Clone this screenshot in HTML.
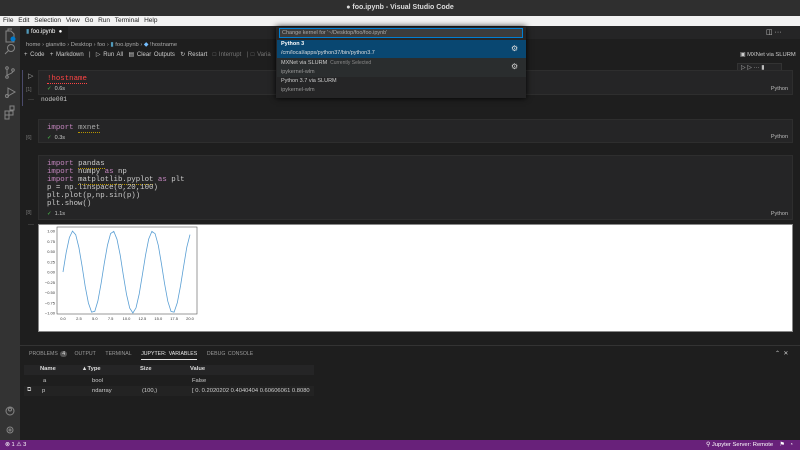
<!DOCTYPE html>
<html><head><meta charset="utf-8"><style>
*{margin:0;padding:0;box-sizing:border-box}
body{width:800px;height:450px;overflow:hidden;background:#1e1e1e;font-family:"Liberation Sans",sans-serif;font-size:6px;color:#ccc;position:relative}
.a{position:absolute;white-space:nowrap}
.mono{font-family:"Liberation Mono",monospace;font-size:7.4px;line-height:8px}
.cell{position:absolute;left:38px;width:755px;background:#252526;border:1px solid #2e2e2e}
.kw{color:#c586c0}.sq{border-bottom:1px dotted #b89500}
.chk{color:#4ec94e}
.py{position:absolute;right:4px;bottom:2px;font-size:5.5px;color:#bbb}
.ln{position:absolute;left:26px;font-size:5px;color:#777}
</style></head><body>
<div class="a" style="left:0;top:0;width:800px;height:16px;background:#2f2f2f;color:#ddd;font-size:7px;font-weight:bold;text-align:center;line-height:16px">● foo.ipynb - Visual Studio Code</div>
<div class="a" style="left:0;top:16px;width:800px;height:10px;background:#f2f2f2;color:#222;font-size:6.5px;line-height:10px;padding-left:3px;word-spacing:3px">File Edit Selection View Go Run Terminal Help</div>
<div class="a" style="left:0;top:26px;width:20px;height:414px;background:#333"></div>
<svg class="a" style="left:0;top:26px" width="20" height="414" fill="none" stroke="#858585" stroke-width="1">
<path d="M6 5h5l3 3v8H6z M8 5V3h4"/><circle cx="13" cy="13" r="2.5" fill="#007acc" stroke="none"/>
<circle cx="11" cy="22" r="3.5"/><path d="M8.5 24.5L5 28"/>
<circle cx="7" cy="42" r="1.3"/><circle cx="7" cy="51" r="1.3"/><circle cx="13" cy="44" r="1.3"/><path d="M7 43v7M13 45c0 3-6 3-6 5"/>
<path d="M8 62l7 4-7 4z"/><circle cx="7" cy="70" r="1.5"/>
<path d="M5 85h4v4H5zM9 85h4v4H9zM5 89h4v4H5zM10 80h4v4h-4z"/>
<circle cx="10" cy="385" r="4"/><circle cx="10" cy="383.5" r="1.5"/>
<circle cx="10" cy="404" r="3"/><circle cx="10" cy="404" r="1"/>
</svg>
<div class="a" style="left:20px;top:26px;width:780px;height:13px;background:#252526"></div>
<div class="a" style="left:20px;top:26px;width:48px;height:13px;background:#1e1e1e;color:#fff;font-size:6px;line-height:13px;padding-left:6px"><span style="color:#519aba">▮</span> foo.ipynb &nbsp;●</div>
<div class="a" style="left:766px;top:28px;color:#ccc;font-size:7px">◫ ···</div>
<div class="a" style="left:26px;top:42px;font-size:5.8px;color:#aaa">home › gianvito › Desktop › foo › <span style="color:#519aba">▮</span> foo.ipynb › <span style="color:#75beff">◆</span> !hostname</div>
<div class="a" style="left:24px;top:51px;font-size:6px;color:#ccc;word-spacing:1px">+ Code &nbsp;+ Markdown &nbsp;| &nbsp;▷ Run All &nbsp;▤ Clear Outputs &nbsp;↻ Restart &nbsp;<span style="color:#777">□ Interrupt &nbsp;| □ Varia</span></div>
<div class="a" style="left:740px;top:52px;font-size:5.8px;color:#ccc">▣ MXNet via SLURM</div>
<div class="a" style="left:737px;top:63px;width:45px;height:10px;border:1px solid #333;background:#252526;font-size:6px;color:#bbb;padding-left:3px;line-height:8px">▷ ▷ ··· ▮</div>
<div class="a" style="left:22px;top:70px;width:1px;height:36px;background:#4a4a6a"></div>
<div class="a" style="left:28px;top:72px;font-size:7px;color:#aaa">▷</div>
<div class="cell" style="top:70px;height:25px"><div class="a mono" style="left:8px;top:4px"><span style="color:#f44;border-bottom:1px dotted #f44">!hostname</span></div><div class="a" style="left:8px;top:15px;font-size:5.5px"><span class="chk">✓</span>&nbsp; 0.6s</div><div class="py">Python</div></div>
<div class="ln" style="top:87px">[1]</div>
<div class="a" style="left:28px;top:97px;color:#aaa">···</div>
<div class="a mono" style="left:41px;top:96px;color:#ccc;font-size:6.2px">node001</div>
<div class="cell" style="top:119px;height:24px"><div class="a mono" style="left:8px;top:4px"><span class="kw">import</span> <span class="sq" style="color:#aaa">mxnet</span></div><div class="a" style="left:8px;top:15px;font-size:5.5px"><span class="chk">✓</span>&nbsp; 0.3s</div><div class="py">Python</div></div>
<div class="ln" style="top:135px">[6]</div>
<div class="cell" style="top:155px;height:65px"><div class="a mono" style="left:8px;top:4px;color:#ccc"><span class="kw">import</span> <span class="sq">pandas</span><br><span class="kw">import</span> numpy <span class="kw">as</span> np<br><span class="kw">import</span> <span class="sq">matplotlib.pyplot</span> <span class="kw">as</span> plt<br>p = np.linspace(0,20,100)<br>plt.plot(p,np.sin(p))<br>plt.show()</div><div class="a" style="left:8px;top:55px;font-size:5.5px"><span class="chk">✓</span>&nbsp; 1.1s</div><div class="py">Python</div></div>
<div class="ln" style="top:210px">[8]</div>
<div class="a" style="left:28px;top:222px;color:#aaa">···</div>
<div class="a" style="left:38px;top:224px;width:755px;height:108px;background:#fff;border:1px solid #888"></div>
<svg class="a" style="left:38px;top:224px" width="170" height="108" font-family="Liberation Sans" font-size="4" fill="#333">
<rect x="19" y="3" width="140" height="87" fill="none" stroke="#555" stroke-width=".6"/>
<g text-anchor="end">
<text x="17" y="8.5">1.00</text><text x="17" y="18.8">0.75</text><text x="17" y="29">0.50</text><text x="17" y="39.3">0.25</text><text x="17" y="49.5">0.00</text><text x="17" y="59.8">−0.25</text><text x="17" y="70">−0.50</text><text x="17" y="80.3">−0.75</text><text x="17" y="90.5">−1.00</text></g>
<g text-anchor="middle"><text x="25" y="96">0.0</text><text x="40.9" y="96">2.5</text><text x="56.8" y="96">5.0</text><text x="72.6" y="96">7.5</text><text x="88.5" y="96">10.0</text><text x="104.4" y="96">12.5</text><text x="120.3" y="96">15.0</text><text x="136.1" y="96">17.5</text><text x="152" y="96">20.0</text></g>
<g transform="translate(25,48)"><polyline fill="none" stroke="#5a9fd4" stroke-width=".8" points="0,0 3.2,-19.6 6.4,-34.5 9.5,-40.9 12.7,-37.3 15.9,-24.5 19.1,-5.8 22.2,14.4 25.4,31 28.6,40.1 31.8,39.3 34.9,28.9 38.1,11.4 41.3,-8.8 44.5,-26.9 47.6,-38.5 50.8,-40.6 54,-32.7 57.2,-16.9 60.3,3.1 63.5,22.3 66.7,36.1 69.9,41 73,35.9 76.2,22 79.4,2.7 82.6,-17.2 85.7,-33 88.9,-40.6 92.1,-38.3 95.3,-26.7 98.4,-8.5 101.6,11.8 104.8,29.2 108,39.4 111.1,40.1 114.3,30.8 117.5,14 120.7,-6.1 123.8,-24.8 127,-37.4"/></g>
</svg>
<div class="a" style="left:20px;top:345px;width:780px;height:95px;background:#1e1e1e;border-top:1px solid #333"></div>
<div class="a" style="left:29px;top:351px;font-size:5.2px;color:#999;word-spacing:1px">PROBLEMS <span style="background:#555;color:#ddd;border-radius:4px;padding:0 2px">4</span> &nbsp; OUTPUT &nbsp;&nbsp; TERMINAL &nbsp;&nbsp; <span style="color:#e7e7e7;border-bottom:1px solid #e7e7e7;padding-bottom:2px">JUPYTER: VARIABLES</span> &nbsp;&nbsp; DEBUG CONSOLE</div>
<div class="a" style="left:775px;top:350px;font-size:6px;color:#ccc">⌃ &nbsp;✕</div>
<div class="a" style="left:24px;top:365px;width:290px;height:10px;background:#252526"></div>
<div class="a" style="left:40px;top:366px;font-size:5.8px;color:#ddd;font-weight:bold">Name</div>
<div class="a" style="left:83px;top:366px;font-size:5.8px;color:#ddd;font-weight:bold">▴ Type</div>
<div class="a" style="left:140px;top:366px;font-size:5.8px;color:#ddd;font-weight:bold">Size</div>
<div class="a" style="left:190px;top:366px;font-size:5.8px;color:#ddd;font-weight:bold">Value</div>
<div class="a" style="left:43px;top:378px;font-size:5.8px">a</div><div class="a" style="left:92px;top:378px;font-size:5.8px">bool</div><div class="a" style="left:192px;top:378px;font-size:5.8px">False</div>
<div class="a" style="left:24px;top:386px;width:290px;height:10px;background:#232323"></div>
<div class="a" style="left:27px;top:387px;font-size:6px">⧉</div>
<div class="a" style="left:42px;top:388px;font-size:5.8px">p</div><div class="a" style="left:92px;top:388px;font-size:5.8px">ndarray</div><div class="a" style="left:142px;top:388px;font-size:5.8px">(100,)</div><div class="a" style="left:192px;top:388px;font-size:5.8px">[ 0. 0.2020202 0.4040404 0.60606061 0.8080</div>
<div class="a" style="left:0;top:440px;width:800px;height:10px;background:#68217a;color:#fff;font-size:5.8px;line-height:10px;padding-left:5px">⊗ 1 ⚠ 3</div>
<div class="a" style="left:706px;top:440px;color:#fff;font-size:5.8px;line-height:10px">⚲ Jupyter Server: Remote &nbsp;&nbsp; ⚑ &nbsp; ◔</div>
<div class="a" style="left:276px;top:27px;width:250px;height:71px;background:#252526;box-shadow:0 0 6px #000"></div>
<div class="a" style="left:279px;top:28px;width:244px;height:10px;background:#3c3c3c;border:1px solid #007fd4;font-size:5.5px;color:#aaa;padding-left:2px;line-height:8px">Change kernel for '~/Desktop/foo/foo.ipynb'</div>
<div class="a" style="left:277px;top:40px;width:249px;height:18px;background:#094771"></div>
<div class="a" style="left:281px;top:41px;font-size:5.5px;color:#fff;font-weight:bold">Python 3</div>
<div class="a" style="left:281px;top:50px;font-size:5.5px;color:#ddd">/cm/local/apps/python37/bin/python3.7</div>
<div class="a" style="left:511px;top:44px;font-size:8px;color:#ddd">⚙</div>
<div class="a" style="left:277px;top:58px;width:249px;height:19px;background:#2a2d2e"></div>
<div class="a" style="left:281px;top:60px;font-size:5.5px;color:#ccc">MXNet via SLURM <span style="color:#888;font-size:5px">&nbsp;Currently Selected</span></div>
<div class="a" style="left:281px;top:69px;font-size:5.5px;color:#999">ipykernel-wlm</div>
<div class="a" style="left:511px;top:62px;font-size:8px;color:#ccc">⚙</div>
<div class="a" style="left:281px;top:78px;font-size:5.5px;color:#ccc">Python 3.7 via SLURM</div>
<div class="a" style="left:281px;top:87px;font-size:5.5px;color:#999">ipykernel-wlm</div>
</body></html>
